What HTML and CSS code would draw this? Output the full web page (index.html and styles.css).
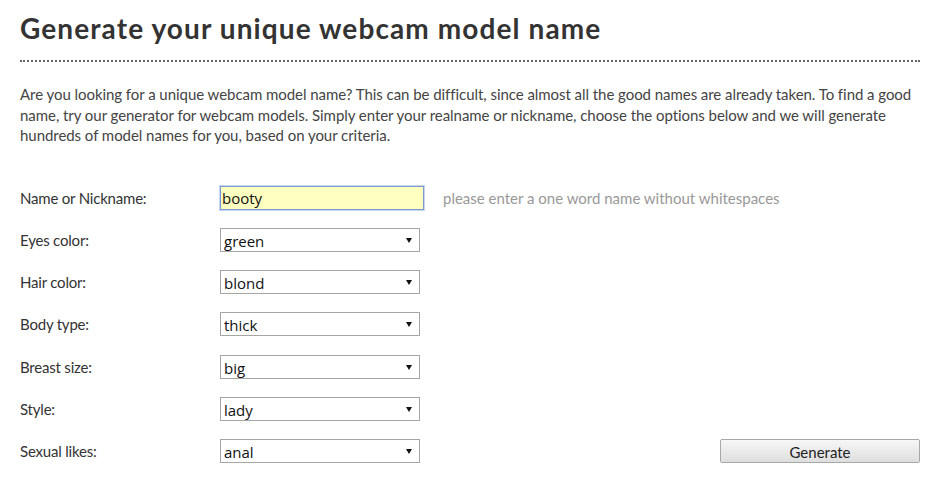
FILE: index.html
```html
<!DOCTYPE html>
<html>
<head>
<meta charset="utf-8">
<link rel="stylesheet" href="styles.css">
</head>
<body>
<div class="page">
  <h1 class="title">Generate your unique webcam model name</h1>
  <p class="intro">Are you looking for a unique webcam model name? This can be difficult, since almost all the good names are already taken. To find a good name, try our generator for webcam models. Simply enter your realname or nickname, choose the options below and we will generate hundreds of model names for you, based on your criteria.</p>
  <form class="form">
    <label class="label">Name or Nickname:</label>
    <div class="control"><input class="text-input" type="text" value="booty"></div>
    <div class="hint">please enter a one word name without whitespaces</div>

    <label class="label">Eyes color:</label>
    <div class="control"><div class="select-wrap"><select class="select"><option>green</option></select></div></div>
    <div></div>

    <label class="label">Hair color:</label>
    <div class="control"><div class="select-wrap"><select class="select"><option>blond</option></select></div></div>
    <div></div>

    <label class="label">Body type:</label>
    <div class="control"><div class="select-wrap"><select class="select"><option>thick</option></select></div></div>
    <div></div>

    <label class="label">Breast size:</label>
    <div class="control"><div class="select-wrap"><select class="select"><option>big</option></select></div></div>
    <div></div>

    <label class="label">Style:</label>
    <div class="control"><div class="select-wrap"><select class="select"><option>lady</option></select></div></div>
    <div></div>

    <label class="label">Sexual likes:</label>
    <div class="control"><div class="select-wrap"><select class="select"><option>anal</option></select></div></div>
    <div class="action"><button class="btn" type="button">Generate</button></div>
  </form>
</div>
</body>
</html>
```

FILE: styles.css
```css
html, body {
  margin: 0;
  padding: 0;
  background: #ffffff;
}

.page {
  width: 900px;
  padding: 11px 14px 0 20px;
  font-family: "Lato", "Open Sans", sans-serif;
  color: #444;
}

.title {
  margin: 0;
  font-family: "Lato", sans-serif;
  font-weight: 700;
  font-size: 28px;
  line-height: 35px;
  letter-spacing: 1.1px;
  color: #333;
  padding-bottom: 14px;
  border-bottom: 2px dotted #666;
}

.intro {
  margin: 22px 0 0;
  font-size: 15px;
  line-height: 20.5px;
  letter-spacing: -0.05px;
  color: #444;
}

.form {
  margin-top: 40px;
  display: grid;
  grid-template-columns: 200px 223px 1fr;
  grid-auto-rows: 24px;
  row-gap: 18.3px;
  align-items: center;
}

.label {
  font-size: 15px;
  color: #333;
  letter-spacing: -0.2px;
}

.control {
  display: flex;
  align-items: center;
}

.text-input {
  box-sizing: border-box;
  width: 204px;
  height: 24px;
  margin: 0;
  padding: 1px 1px 0;
  border: 1px solid #7a9cd3;
  box-shadow: 0 0 0 1px #c7d5ec;
  background: #ffffbf;
  font-family: "Open Sans", sans-serif;
  font-size: 15px;
  color: #111;
  outline: none;
}

.hint {
  font-size: 15px;
  color: #999;
  letter-spacing: 0px;
}

.select-wrap {
  position: relative;
  width: 200px;
  height: 24px;
}

.select-wrap::after {
  content: "";
  position: absolute;
  right: 8px;
  top: 10px;
  border-left: 3px solid transparent;
  border-right: 3px solid transparent;
  border-top: 5px solid #111;
  pointer-events: none;
}

.select {
  -webkit-appearance: none;
  appearance: none;
  box-sizing: border-box;
  width: 200px;
  height: 24px;
  margin: 0;
  padding: 2px 3px 0;
  border: 1px solid #a6a6a6;
  border-radius: 0;
  background: #fff;
  font-family: "Open Sans", sans-serif;
  font-size: 15px;
  color: #111;
}

.action {
  display: flex;
  justify-content: flex-end;
}

.btn {
  width: 200px;
  height: 24px;
  margin: 0;
  padding: 2px 0 0;
  border: 1px solid #a8a8a8;
  border-radius: 2px;
  background: linear-gradient(#f7f7f7, #dedede);
  font-family: "Lato", sans-serif;
  font-size: 15px;
  color: #222;
}
```
